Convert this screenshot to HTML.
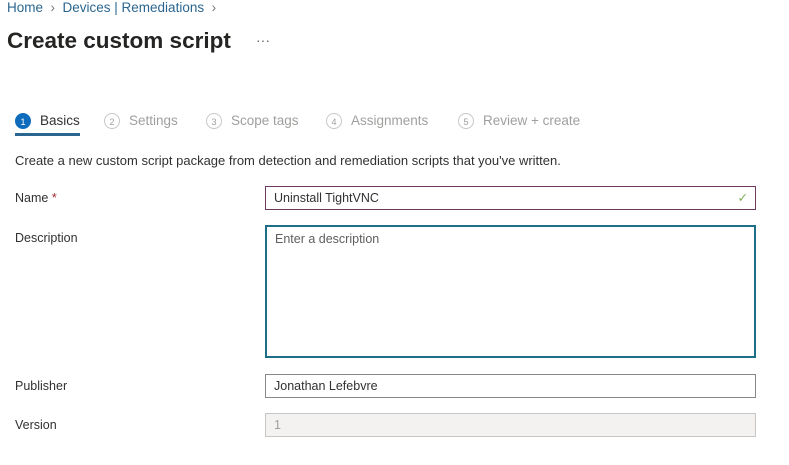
<!DOCTYPE html>
<html><head><style>
body{margin:0;width:789px;height:465px;background:#fff;font-family:"Liberation Sans",sans-serif;color:#323130;position:relative;overflow:hidden}
.a{position:absolute;white-space:nowrap}
.bc{color:#2b6690;font-size:13.5px}
.step{position:absolute;top:113px;font-size:13.5px;color:#a19f9d}
.c{display:inline-block;width:16px;height:16px;border:1px solid #c8c6c4;border-radius:50%;font-size:9px;text-align:center;line-height:16px;margin-right:9px;vertical-align:middle;box-sizing:border-box}
.lbl{font-size:12.5px;color:#323130}
.box{position:absolute;left:265px;width:491px;box-sizing:border-box;font-size:12.5px;padding:0 8px}
</style></head><body>
<div class="a bc" style="left:7px;top:0px">Home <span style="color:#777">&nbsp;›&nbsp;</span> Devices | Remediations <span style="color:#777">&nbsp;›</span></div>
<div class="a" style="left:7px;top:28px;font-size:22.5px;font-weight:bold;color:#252423">Create custom script</div>
<div class="a" style="left:256px;top:32px;font-size:14px;color:#666">···</div>
<div class="step" style="left:15px;color:#323130"><span class="c" style="background:#0f6cbd;border-color:#0f6cbd;color:#fff">1</span>Basics</div>
<div style="position:absolute;left:15px;top:133px;width:65px;height:3px;background:#2b6690"></div>
<div class="step" style="left:104px"><span class="c">2</span>Settings</div>
<div class="step" style="left:206px"><span class="c">3</span>Scope tags</div>
<div class="step" style="left:326px"><span class="c">4</span>Assignments</div>
<div class="step" style="left:458px"><span class="c">5</span>Review + create</div>
<div class="a lbl" style="left:15px;top:153px;font-size:13px">Create a new custom script package from detection and remediation scripts that you've written.</div>
<div class="a lbl" style="left:15px;top:191px">Name <span style="color:#a4262c">*</span></div>
<div class="box" style="top:186px;height:24px;border:1px solid #6b3a5e;line-height:22px">Uninstall TightVNC<span style="position:absolute;right:7px;color:#7fae5c">✓</span></div>
<div class="a lbl" style="left:15px;top:231px">Description</div>
<div class="box" style="top:225px;height:133px;border:2px solid #1e6e88;padding-top:5px;color:#605e5c">Enter a description</div>
<div class="a lbl" style="left:15px;top:379px">Publisher</div>
<div class="box" style="top:374px;height:24px;border:1px solid #8a8886;line-height:22px">Jonathan Lefebvre</div>
<div class="a lbl" style="left:15px;top:418px">Version</div>
<div class="box" style="top:413px;height:24px;border:1px solid #c8c6c4;background:#f3f2f1;line-height:22px;color:#a19f9d">1</div>
</body></html>
